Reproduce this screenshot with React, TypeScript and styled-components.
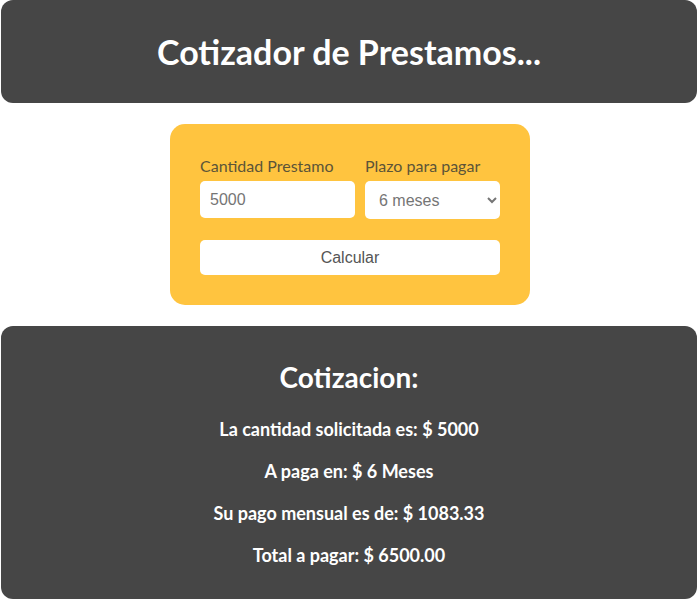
import React, {useState} from 'react';
import styled, {createGlobalStyle} from 'styled-components';

const GlobalStyle = createGlobalStyle`
  * { box-sizing: border-box; }
  body {
    margin: 0;
    padding: 0 1px 0 1px;
    background: #fff;
    font-family: Lato, "Noto Sans", sans-serif;
  }
`

const Page = styled.div`
  display: flex;
  flex-direction: column;
  align-items: center;
`
const Header = styled.header`
  width: 100%;
  height: 103px;
  background: #464646;
  border-radius: 12px;
  display: flex;
  align-items: center;
  justify-content: center;
`
const Title = styled.h1`
  margin: 0;
  color: #fff;
  font-size: 34px;
  font-weight: 700;
`
const Form = styled.form`
  margin: 21px 0 0 2px;
  width: 360px;
  background: #FFC43F;
  border-radius: 15px;
  padding: 32px 30px 30px;
  display: flex;
  flex-direction: column;
  gap: 21px;
`
const Row = styled.div`
  display: grid;
  grid-template-columns: 155px 135px;
  column-gap: 10px;
`
const Field = styled.div`
  display: flex;
  flex-direction: column;
  gap: 6px;
`
const Label = styled.label`
  font-size: 16px;
  color: #5c5438;
  line-height: 19px;
`
const Input = styled.input`
  height: 37px;
  border: none;
  border-radius: 5px;
  padding: 0 10px;
  font-family: "Liberation Sans", Arial, sans-serif;
  font-size: 16px;
  color: #757575;
  outline: none;
`
const Select = styled.select`
  height: 38px;
  border: none;
  border-radius: 5px;
  padding: 0 8px 0 10px;
  font-family: "Liberation Sans", Arial, sans-serif;
  font-size: 16px;
  color: #757575;
  background: #fff;
  outline: none;
`
const Button = styled.button`
  height: 35px;
  border: none;
  border-radius: 5px;
  background: #fff;
  font-family: "Liberation Sans", Arial, sans-serif;
  font-size: 16px;
  color: #555;
  cursor: pointer;
`
const Result = styled.section`
  margin-top: 21px;
  width: 100%;
  background: #464646;
  border-radius: 12px;
  padding: 34px 20px 23px;
  color: #fff;
  text-align: center;
`
const ResultTitle = styled.h2`
  margin: 0 0 14px;
  font-size: 28px;
  line-height: 34px;
  font-weight: 700;
`
const ResultLine = styled.p`
  margin: 0;
  font-size: 18px;
  font-weight: 700;
  line-height: 42px;
`

const App = () => {
  const [cantidad, setCantidad] = useState('5000')
  const [plazo, setPlazo] = useState('6')

  const total = Number(cantidad) * 1.3
  const mensual = total / Number(plazo)

  return (
    <>
      <GlobalStyle/>
      <Page>
        <Header>
          <Title>Cotizador de Prestamos...</Title>
        </Header>
        <Form onSubmit={e => e.preventDefault()}>
          <Row>
            <Field>
              <Label>Cantidad Prestamo</Label>
              <Input type="number" value={cantidad} onChange={e => setCantidad(e.target.value)}/>
            </Field>
            <Field>
              <Label>Plazo para pagar</Label>
              <Select value={plazo} onChange={e => setPlazo(e.target.value)}>
                <option value="3">3 meses</option>
                <option value="6">6 meses</option>
                <option value="12">12 meses</option>
                <option value="24">24 meses</option>
              </Select>
            </Field>
          </Row>
          <Button type="submit">Calcular</Button>
        </Form>
        <Result>
          <ResultTitle>Cotizacion:</ResultTitle>
          <ResultLine>La cantidad solicitada es: $ {cantidad}</ResultLine>
          <ResultLine>A paga en: $ {plazo} Meses</ResultLine>
          <ResultLine>Su pago mensual es de: $ {mensual.toFixed(2)}</ResultLine>
          <ResultLine>Total a pagar: $ {total.toFixed(2)}</ResultLine>
        </Result>
      </Page>
    </>
  );
};

export default App;
